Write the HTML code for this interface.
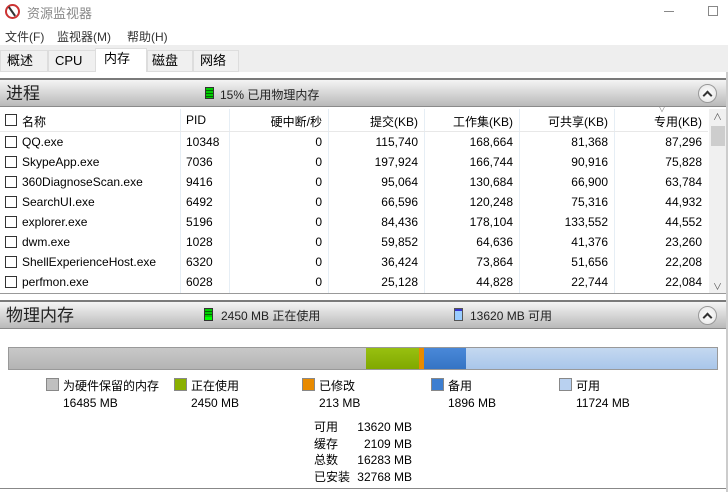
<!DOCTYPE html>
<html><head><meta charset="utf-8"><style>
*{margin:0;padding:0;box-sizing:border-box}
body{width:728px;height:492px;background:#fff;font-family:"Liberation Sans","Noto Sans CJK SC",sans-serif;font-size:12px;color:#000;position:relative;overflow:hidden}
.a{position:absolute;white-space:nowrap}
.hdr{position:absolute;left:0;width:726px;height:29px;background:linear-gradient(#f4f4f4,#b9b9b9);border-top:2px solid #7a7a7a;border-bottom:1px solid #8a8a8a}
.hdr .t{position:absolute;left:6px;top:2px;font-size:17px;line-height:24px;color:#222}
.btn{position:absolute;right:9px;top:4px;width:19px;height:19px;border-radius:50%;border:1px solid #999;background:radial-gradient(#fff,#e4e4e4)}
.btn:after{content:"";position:absolute;left:5px;top:7px;width:5px;height:5px;border-left:2px solid #333;border-top:2px solid #333;transform:rotate(45deg)}
.cb{position:absolute;left:5px;width:12px;height:12px;border:1px solid #333;background:#fff}
.row{position:absolute;left:0;width:708px;height:20px}
.row span{position:absolute;top:3px}
.r{text-align:right}
.vl{position:absolute;top:109px;height:184px;width:1px;background:#e6eef5}
.sq{position:absolute;width:13px;height:13px;border:1px solid #888}
.tab{position:absolute;top:50px;height:22px;border:1px solid #ddd;background:#f0f0f0;font-size:13px;line-height:20px;padding-left:6px}
</style></head><body>
<div class="a" style="left:5px;top:4px;width:15px;height:15px;border:2px solid #c33;border-radius:50%;background:#fff"></div>
<div class="a" style="left:11px;top:6px;width:2px;height:11px;background:#333;transform:rotate(-35deg)"></div>
<div class="a" style="left:27px;top:3px;font-size:13px;color:#888">资源监视器</div>
<div class="a" style="left:664px;top:11px;width:10px;height:1px;background:#888"></div>
<div class="a" style="left:708px;top:6px;width:10px;height:10px;border:1px solid #888"></div>
<div class="a" style="left:5px;top:28px;font-size:12px;color:#333">文件(F)</div>
<div class="a" style="left:57px;top:28px;font-size:12px;color:#333">监视器(M)</div>
<div class="a" style="left:127px;top:28px;font-size:12px;color:#333">帮助(H)</div>
<div class="a" style="left:0;top:45px;width:728px;height:27px;background:#eee"></div>
<div class="tab" style="left:0;width:48px">概述</div>
<div class="tab" style="left:48px;width:48px">CPU</div>
<div class="a" style="left:95px;top:48px;width:52px;height:25px;border:1px solid #ddd;border-bottom:none;background:#fff;padding-left:8px;font-size:13px;line-height:20px">内存</div>
<div class="tab" style="left:147px;width:46px;padding-left:4px">磁盘</div>
<div class="tab" style="left:193px;width:46px">网络</div>
<div class="a" style="left:0;top:72px;width:728px;height:420px;background:#fff"></div>
<div class="a" style="left:726px;top:72px;width:2px;height:420px;background:#ccc"></div>
<div class="hdr" style="top:78px"><div class="t">进程</div>
<div class="a" style="left:205px;top:7px;width:9px;height:12px;border:1px solid #333;background-image:repeating-linear-gradient(#0c0 0 2px,#060 2px 3px)"></div>
<div class="a" style="left:220px;top:6px;font-size:12px;color:#222">15% 已用物理内存</div>
<div class="btn"></div></div>
<div class="vl" style="left:180px"></div><div class="vl" style="left:229px"></div><div class="vl" style="left:328px"></div><div class="vl" style="left:424px"></div><div class="vl" style="left:519px"></div><div class="vl" style="left:614px"></div>
<div class="row" style="top:110px"><div class="cb" style="top:4px"></div><span style="left:22px">名称</span><span style="left:186px">PID</span><span class="r" style="right:386px">硬中断/秒</span><span class="r" style="right:290px">提交(KB)</span><span class="r" style="right:195px">工作集(KB)</span><span class="r" style="right:100px">可共享(KB)</span><span class="r" style="right:6px">专用(KB)</span></div>
<div class="a" style="left:658px;top:104px;font-size:8px;color:#888">∨</div>
<div class="a" style="left:0;top:131px;width:708px;height:1px;background:#e8e8e8"></div>
<div class="row" style="top:132px"><div class="cb" style="top:4px"></div><span style="left:22px">QQ.exe</span><span style="left:186px">10348</span><span style="right:386px">0</span><span style="right:290px">115,740</span><span style="right:195px">168,664</span><span style="right:100px">81,368</span><span style="right:6px">87,296</span></div>
<div class="row" style="top:152px"><div class="cb" style="top:4px"></div><span style="left:22px">SkypeApp.exe</span><span style="left:186px">7036</span><span style="right:386px">0</span><span style="right:290px">197,924</span><span style="right:195px">166,744</span><span style="right:100px">90,916</span><span style="right:6px">75,828</span></div>
<div class="row" style="top:172px"><div class="cb" style="top:4px"></div><span style="left:22px">360DiagnoseScan.exe</span><span style="left:186px">9416</span><span style="right:386px">0</span><span style="right:290px">95,064</span><span style="right:195px">130,684</span><span style="right:100px">66,900</span><span style="right:6px">63,784</span></div>
<div class="row" style="top:192px"><div class="cb" style="top:4px"></div><span style="left:22px">SearchUI.exe</span><span style="left:186px">6492</span><span style="right:386px">0</span><span style="right:290px">66,596</span><span style="right:195px">120,248</span><span style="right:100px">75,316</span><span style="right:6px">44,932</span></div>
<div class="row" style="top:212px"><div class="cb" style="top:4px"></div><span style="left:22px">explorer.exe</span><span style="left:186px">5196</span><span style="right:386px">0</span><span style="right:290px">84,436</span><span style="right:195px">178,104</span><span style="right:100px">133,552</span><span style="right:6px">44,552</span></div>
<div class="row" style="top:232px"><div class="cb" style="top:4px"></div><span style="left:22px">dwm.exe</span><span style="left:186px">1028</span><span style="right:386px">0</span><span style="right:290px">59,852</span><span style="right:195px">64,636</span><span style="right:100px">41,376</span><span style="right:6px">23,260</span></div>
<div class="row" style="top:252px"><div class="cb" style="top:4px"></div><span style="left:22px">ShellExperienceHost.exe</span><span style="left:186px">6320</span><span style="right:386px">0</span><span style="right:290px">36,424</span><span style="right:195px">73,864</span><span style="right:100px">51,656</span><span style="right:6px">22,208</span></div>
<div class="row" style="top:272px"><div class="cb" style="top:4px"></div><span style="left:22px">perfmon.exe</span><span style="left:186px">6028</span><span style="right:386px">0</span><span style="right:290px">25,128</span><span style="right:195px">44,828</span><span style="right:100px">22,744</span><span style="right:6px">22,084</span></div>
<div class="a" style="left:709px;top:109px;width:17px;height:184px;background:#f0f0f0"></div>
<div class="a" style="left:711px;top:126px;width:14px;height:20px;background:#cdcdcd"></div>
<div class="a" style="left:713px;top:110px;font-size:9px;color:#555">∧</div>
<div class="a" style="left:713px;top:280px;font-size:9px;color:#555">∨</div>
<div class="a" style="left:0;top:293px;width:726px;height:1px;background:#999"></div>
<div class="hdr" style="top:300px"><div class="t">物理内存</div>
<div class="a" style="left:204px;top:6px;width:9px;height:13px;border:1px solid #333;background-image:linear-gradient(transparent 8px,#0f0 8px),repeating-linear-gradient(#0c0 0 2px,#060 2px 3px)"></div>
<div class="a" style="left:221px;top:5px;font-size:12px;color:#222">2450 MB 正在使用</div>
<div class="a" style="left:454px;top:6px;width:9px;height:13px;border:1px solid #555;background:linear-gradient(#33c 0 2px,#9cf 2px)"></div>
<div class="a" style="left:470px;top:5px;font-size:12px;color:#222">13620 MB 可用</div>
<div class="btn"></div></div>
<div class="a" style="left:8px;top:347px;width:710px;height:23px;border:1px solid #999;display:flex">
<div style="width:357px;background:linear-gradient(#c8c8c8,#b4b4b4)"></div>
<div style="width:53px;background:linear-gradient(#98c010,#80a800)"></div>
<div style="width:5px;background:#e88a00"></div>
<div style="width:42px;background:linear-gradient(#4a88d8,#3574c4)"></div>
<div style="flex:1;background:linear-gradient(#c4d8f0,#a9c6ea)"></div></div>
<div class="sq" style="left:46px;top:378px;background:#c0c0c0"></div><div class="a" style="left:63px;top:377px">为硬件保留的内存</div><div class="a" style="left:63px;top:396px">16485 MB</div>
<div class="sq" style="left:174px;top:378px;background:#8ab000"></div><div class="a" style="left:191px;top:377px">正在使用</div><div class="a" style="left:191px;top:396px">2450 MB</div>
<div class="sq" style="left:302px;top:378px;background:#e88a00"></div><div class="a" style="left:319px;top:377px">已修改</div><div class="a" style="left:319px;top:396px">213 MB</div>
<div class="sq" style="left:431px;top:378px;background:#3d7ed0"></div><div class="a" style="left:448px;top:377px">备用</div><div class="a" style="left:448px;top:396px">1896 MB</div>
<div class="sq" style="left:559px;top:378px;background:#b9d1f0"></div><div class="a" style="left:576px;top:377px">可用</div><div class="a" style="left:576px;top:396px">11724 MB</div>
<div class="a" style="left:314px;top:419px;line-height:16.5px">可用<br>缓存<br>总数<br>已安装</div>
<div class="a" style="left:352px;top:419px;line-height:16.5px;width:60px;text-align:right">13620 MB<br>2109 MB<br>16283 MB<br>32768 MB</div>
<div class="a" style="left:0;top:488px;width:726px;height:1px;background:#888"></div>
</body></html>
